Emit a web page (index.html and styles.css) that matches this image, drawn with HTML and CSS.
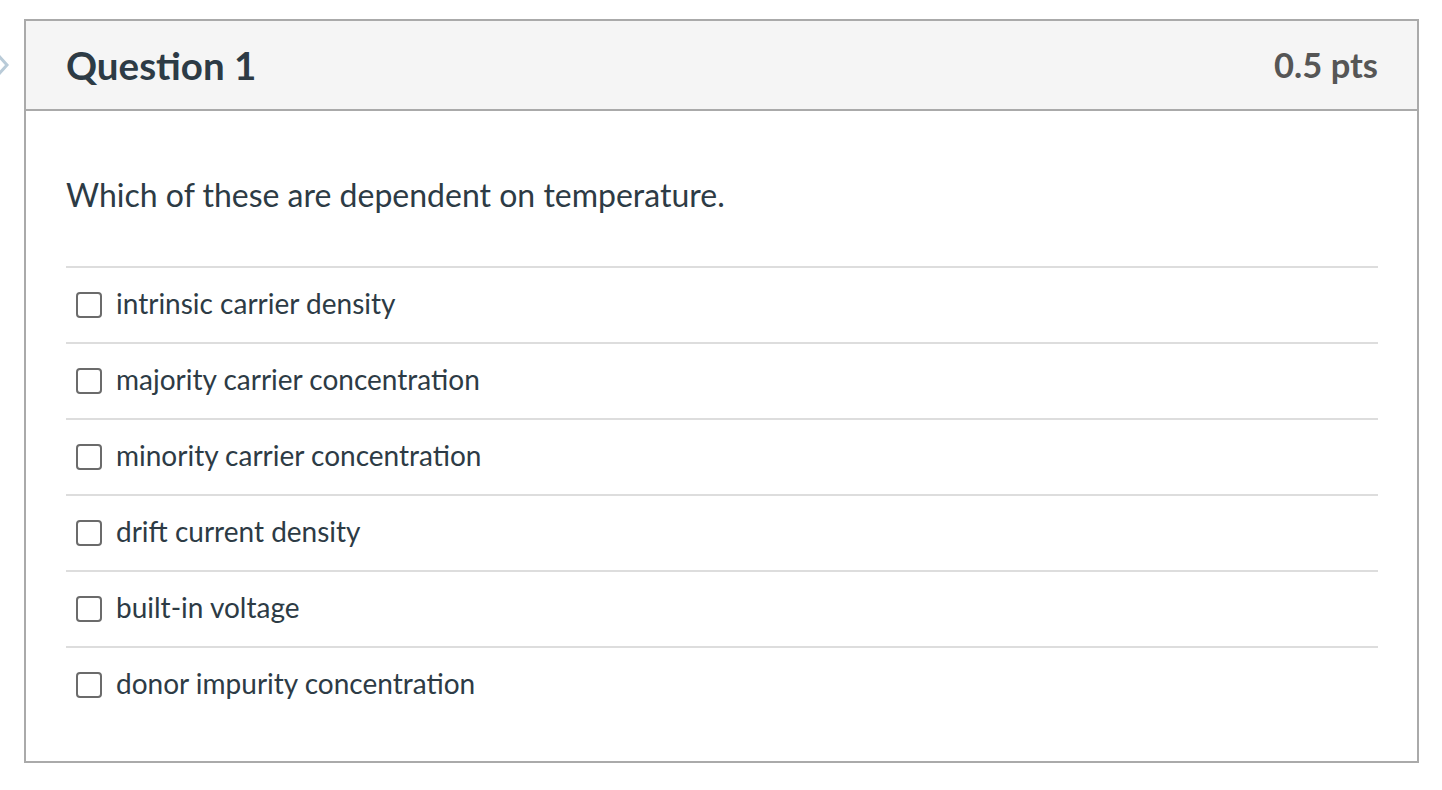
FILE: index.html
```html
<!DOCTYPE html>
<html lang="en">
<head>
<meta charset="utf-8">
<title>Question 1</title>
<link rel="stylesheet" href="styles.css">
</head>
<body>
<div class="page">
  <svg class="marker" width="12" height="30" viewBox="0 0 12 30" aria-hidden="true">
    <polyline points="-2,5 7,15 -2,25" fill="none" stroke="#b9cbd8" stroke-width="3"/>
  </svg>
  <div class="question">
    <div class="q-header">
      <h2 class="q-title">Question 1</h2>
      <div class="q-points">0.5 pts</div>
    </div>
    <div class="q-body">
      <p class="q-text">Which of these are dependent on temperature.</p>
      <ul class="answers">
        <li class="answer"><span class="box"></span><span class="label">intrinsic carrier density</span></li>
        <li class="answer"><span class="box"></span><span class="label">majority carrier concentration</span></li>
        <li class="answer"><span class="box"></span><span class="label">minority carrier concentration</span></li>
        <li class="answer"><span class="box"></span><span class="label">drift current density</span></li>
        <li class="answer"><span class="box"></span><span class="label">built-in voltage</span></li>
        <li class="answer"><span class="box"></span><span class="label">donor impurity concentration</span></li>
      </ul>
    </div>
  </div>
</div>
</body>
</html>
```
FILE: styles.css
```css
html, body {
  margin: 0;
  padding: 0;
  background: #ffffff;
}
body {
  font-family: Lato, "Open Sans", sans-serif;
  color: #2d3b45;
}
.page {
  position: relative;
  padding: 19px 23px 0 24px;
}
.marker {
  position: absolute;
  left: 0;
  top: 50px;
}
.question {
  border: 2px solid #aaaaaa;
  background: #ffffff;
}
.q-header {
  display: flex;
  align-items: center;
  justify-content: space-between;
  height: 88px;
  padding: 0 39px 0 40px;
  background: #f5f5f5;
  border-bottom: 2px solid #aaaaaa;
}
.q-title {
  margin: 0;
  font-size: 38.5px;
  font-weight: 700;
  color: #2d3b45;
  line-height: 1.2;
}
.q-points {
  font-size: 34.5px;
  font-weight: 700;
  color: #565656;
  line-height: 1.2;
}
.q-body {
  padding: 65px 39px 39px 40px;
}
.q-text {
  margin: 0 0 52px;
  font-size: 32px;
  line-height: 38px;
}
.answers {
  list-style: none;
  margin: 0;
  padding: 0;
}
.answer {
  display: flex;
  align-items: center;
  height: 74px;
  padding-left: 10px;
  border-top: 2px solid #dddddd;
}
.box {
  flex: none;
  width: 22px;
  height: 22px;
  border: 2px solid #6b6b6b;
  border-radius: 4px;
  margin-right: 14px;
}
.label {
  font-size: 28px;
  line-height: 32px;
  position: relative;
  top: -2px;
}
```
